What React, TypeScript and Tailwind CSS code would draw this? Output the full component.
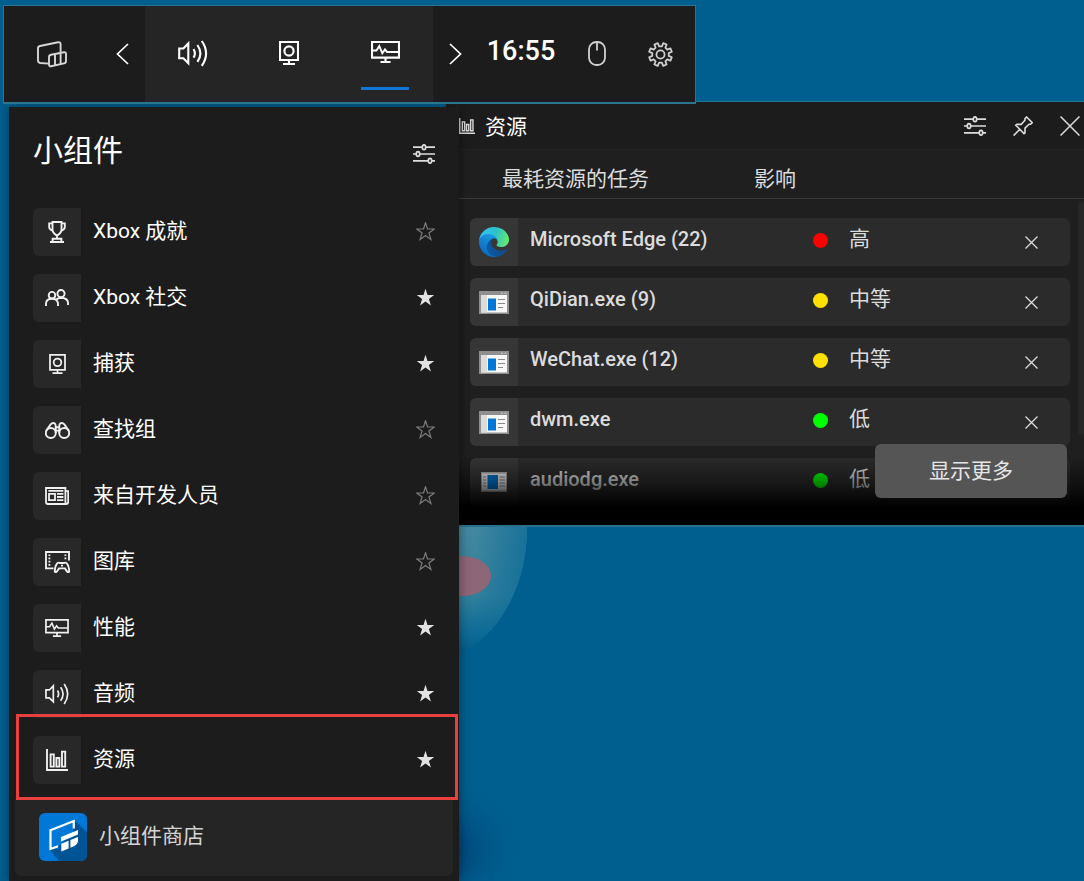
import type { ReactNode } from "react";

type IconProps = { className?: string };

function Line({
  w,
  h,
  className = "",
  stroke = 2.1,
  children,
}: {
  w: number;
  h: number;
  className?: string;
  stroke?: number;
  children: ReactNode;
}) {
  return (
    <svg
      viewBox={`0 0 ${w} ${h}`}
      className={className}
      fill="none"
      stroke="currentColor"
      strokeWidth={stroke}
      aria-hidden="true"
    >
      {children}
    </svg>
  );
}

const WidgetsIcon = ({ className }: IconProps) => (
  <Line w={30} h={27} stroke={1.9} className={className}>
    <path d="M12 22.6 3.2 22Q1 21.6 1 19.6V7.4Q1 5.4 3 5L21 1.2Q23.6 1 23.6 3.2V11" />
    <path d="M12 16.2Q12 14.2 14 13.8L27 11.2Q29 11 29 13V20Q29 22 27 22.4L14 25.2Q12 25.4 12 23.6ZM18 13.2V24.2M23.6 12V23" />
  </Line>
);
const ChevronLeft = ({ className }: IconProps) => (
  <Line w={13} h={22} stroke={1.7} className={className}>
    <path d="M12 1 1.5 11 12 21" />
  </Line>
);
const ChevronRight = ({ className }: IconProps) => (
  <Line w={13} h={22} stroke={1.7} className={className}>
    <path d="M1 1 11.5 11 1 21" />
  </Line>
);
const AudioIcon = ({ className }: IconProps) => (
  <Line w={31} h={27} className={className}>
    <path d="M1.2 8.5H5.4L10.3 3.4V23.2L5.4 18.3H1.2ZM15.5 9.2Q18.3 13.4 15.5 17.6M19.4 5Q25.4 13.4 19.4 21.8M23.8 1Q32.4 13.4 23.8 25.8" />
  </Line>
);
const CaptureIcon = ({ className }: IconProps) => (
  <Line w={20} h={24} className={className}>
    <path d="M1 1H19V19H1ZM10 19V22M4 23H16" />
    <circle cx="10" cy="10" r="4.6" />
  </Line>
);
const PerformanceIcon = ({ className }: IconProps) => (
  <Line w={29} h={22} className={className}>
    <path d="M1 1H28V16.6H1ZM14.5 17V20M9.5 21H19.5" />
    <path d="M1 9.5H5.5L8.3 5 11.3 12.3 14 8.4 16 11H28" strokeWidth="1.9" />
  </Line>
);
const MouseIcon = ({ className }: IconProps) => (
  <Line w={18} h={25} stroke={1.8} className={className}>
    <rect x="1" y="1" width="16" height="23" rx="7.5" />
    <path d="M9 1V9.5" />
  </Line>
);

const TOOTH_ANGLES = [0, 45, 90, 135, 180, 225, 270, 315];
const gearOutline = TOOTH_ANGLES.map((deg) =>
  (
    [
      [8, -13],
      [11.2, -9],
      [11.2, 9],
      [8, 13],
    ] as const
  )
    .map(([r, offset]) => {
      const a = ((deg + 22.5 + offset) * Math.PI) / 180;
      return `${(12 + r * Math.cos(a)).toFixed(2)} ${(12 + r * Math.sin(a)).toFixed(2)}`;
    })
    .join("L"),
).join("L");

const GearIcon = ({ className }: IconProps) => (
  <Line w={24} h={24} stroke={1.7} className={className}>
    <path d={`M${gearOutline}Z`} strokeLinejoin="round" />
    <circle cx="12" cy="12" r="3.9" />
  </Line>
);
const SlidersIcon = ({ className }: IconProps) => (
  <Line w={22} h={20} stroke={1.7} className={className}>
    <path d="M0 3.2H9M13 3.2H22M0 10H3M7 10H22M0 16.8H15M19 16.8H22" />
    <ellipse cx="11" cy="3.2" rx="1.7" ry="2.4" />
    <ellipse cx="5" cy="10" rx="1.7" ry="2.4" />
    <ellipse cx="17" cy="16.8" rx="1.7" ry="2.4" />
  </Line>
);
const PinIcon = ({ className }: IconProps) => (
  <Line w={20} h={20} stroke={1.6} className={className}>
    <path d="M.6 19.6 7.4 12.8M13.6 1 19.2 6.6 17.6 8.2H16L12 12.2V16.8L11 17.6 2.8 9.2 3.8 8.4H8.2L12 4.2V2.6Z" />
  </Line>
);
const CloseIcon = ({ className }: IconProps) => (
  <Line w={20} h={20} stroke={1.5} className={className}>
    <path d="M.5.5 19.5 19.5M19.5.5.5 19.5" />
  </Line>
);
const DismissIcon = ({ className }: IconProps) => (
  <Line w={13} h={13} stroke={1.3} className={className}>
    <path d="M.5.5 12.5 12.5M12.5.5.5 12.5" />
  </Line>
);
const TrophyIcon = ({ className }: IconProps) => (
  <Line w={18} h={22} stroke={1.9} className={className}>
    <path d="M4.5 1H13.5V8.5Q13.5 12 9 14.6 4.5 12 4.5 8.5ZM4.5 2.4H1.2V6Q1.2 8.6 4.8 9.8M13.5 2.4H16.8V6Q16.8 8.6 13.2 9.8M9 14.6V17.6M4.6 21V17.8H13.4V21M2 21H16" />
  </Line>
);
const SocialIcon = ({ className }: IconProps) => (
  <Line w={24} h={18} stroke={1.9} className={className}>
    <circle cx="7" cy="6.2" r="3.3" />
    <circle cx="16" cy="4.6" r="3.6" />
    <path d="M1 17V14.5Q1.2 9.8 7 9.8 12.6 9.8 13 14.5V17M11.2 11Q12.6 8.8 16 8.8 22.6 9.2 23 13.5V16" />
  </Line>
);
const BinocularsIcon = ({ className }: IconProps) => (
  <Line w={25} h={17} stroke={1.9} className={className}>
    <circle cx="5.8" cy="11" r="5" />
    <circle cx="19.2" cy="11" r="5" />
    <path d="M1.4 8.6 5.6 2.4Q7.6 .2 9.8 1.4 10.6 2 10.7 4V11M23.6 8.6 19.4 2.4Q17.4 .2 15.2 1.4 14.4 2 14.3 4V11M10.7 5.2H14.3M10.7 8.6H14.3" />
  </Line>
);
const NewsIcon = ({ className }: IconProps) => (
  <Line w={24} h={18} stroke={1.8} className={className}>
    <path d="M20.4 15V1H1V15Q1 17 3 17H21Q23.2 17 23.2 15V4.2H20.8M20.4 15Q20.4 16.4 21.4 17M4 6.9H10V13.2H4ZM12 6.9H18.4M12 10H18.4M12 13.2H18.4M3.4 3.8H18.4" />
  </Line>
);
const GalleryIcon = ({ className }: IconProps) => (
  <Line w={25} h={22} stroke={1.9} className={className}>
    <path d="M8.5 17.4H1V1H24V9.5" />
    <path d="M4.4 3.4V16M20.4 3.4V9.5" strokeDasharray="1.7 1.5" />
    <path d="M9.8 20.6Q9.8 15 12.4 12.2 13.4 11.2 14.8 12H19.2Q20.6 11.2 21.6 12.2 24.2 15 24.2 20.6 23 22 21.4 19.6L20 17.4H14L12.6 19.6Q11 22 9.8 20.6ZM16 14.6H18" />
  </Line>
);
const ResourcesIcon = ({ className }: IconProps) => (
  <Line w={22} h={22} stroke={1.9} className={className}>
    <path d="M1 0V21H22M4.6 5.4H7.8V17.6H4.6ZM10.4 9H13.4V17.6H10.4ZM16 2.6H19.2V17.6H16Z" />
  </Line>
);

const STAR = "M9.5.8 11.5 7H18.2L12.9 10.9 14.9 17.4 9.5 13.5 4.1 17.4 6.1 10.9.8 7H7.5Z";
const Star = ({ filled }: { filled: boolean }) => (
  <svg viewBox="0 0 19 19" className="size-[19px]" aria-hidden="true">
    {filled ? (
      <path d={STAR} fill="#e2e2e2" />
    ) : (
      <path d={STAR} fill="none" stroke="#7c7c7c" strokeWidth="1.2" />
    )}
  </svg>
);

const EdgeIcon = () => (
  <svg viewBox="0 0 256 256" className="size-[30px]" aria-hidden="true">
    <defs>
      <linearGradient id="edgeDeep" x1="63" y1="177" x2="241" y2="177" gradientUnits="userSpaceOnUse">
        <stop offset="0" stopColor="#0c59a4" />
        <stop offset="1" stopColor="#114a8b" />
      </linearGradient>
      <linearGradient id="edgeBlue" x1="130" y1="70" x2="50" y2="230" gradientUnits="userSpaceOnUse">
        <stop offset="0" stopColor="#1b9de2" />
        <stop offset=".5" stopColor="#1480d0" />
        <stop offset="1" stopColor="#0c6cc0" />
      </linearGradient>
      <linearGradient id="edgeGreen" x1="20" y1="60" x2="245" y2="130" gradientUnits="userSpaceOnUse">
        <stop offset="0" stopColor="#35c1f1" />
        <stop offset=".5" stopColor="#2fc2c6" />
        <stop offset="1" stopColor="#66eb6e" />
      </linearGradient>
    </defs>
    <path
      fill="url(#edgeDeep)"
      d="M235.68 190.46a93.73 93.73 0 0 1-10.54 4.71 101.87 101.87 0 0 1-35.9 6.46c-47.32 0-88.54-32.55-88.54-74.32a31.48 31.48 0 0 1 16.43-27.31c-42.8 1.8-53.8 46.4-53.8 72.53 0 73.88 68.09 81.37 82.76 81.37 7.91 0 19.84-2.3 27-4.56l1.31-.44A128.34 128.34 0 0 0 241 196.34a4 4 0 0 0-5.32-5.88z"
    />
    <path
      fill="url(#edgeBlue)"
      d="M105.73 241.42A79.2 79.2 0 0 1 83 220.08a80.72 80.72 0 0 1 29.49-120c3.12-1.47 8.45-4.13 15.54-4a32.35 32.35 0 0 1 25.69 13 31.88 31.88 0 0 1 6.36 18.66c0-.21 24.46-79.6-80-79.6-43.9 0-80 41.66-80 78.21a130.15 130.15 0 0 0 12.11 56 128 128 0 0 0 156.38 67.11 75.55 75.55 0 0 1-62.78-8z"
    />
    <path
      fill="url(#edgeGreen)"
      d="M152.33 148.86c-.81 1.05-3.3 2.5-3.3 5.66 0 2.61 1.7 5.12 4.72 7.23 14.38 10 41.49 8.68 41.56 8.68a59.56 59.56 0 0 0 30.27-8.35A61.38 61.38 0 0 0 256 109.18c.26-22.41-8-37.31-11.34-43.91C223.46 23.84 177.72 0 128 0A128 128 0 0 0 0 126.2c.48-36.54 36.8-66.05 80-66.05 3.5 0 23.46.34 42 10.07 16.34 8.58 24.9 18.94 30.85 29.21 6.18 10.67 7.28 24.15 7.28 29.52s-2.74 13.33-7.8 19.91z"
    />
  </svg>
);

const AppWindowIcon = () => (
  <svg viewBox="0 0 30 23" className="h-[23px] w-[30px]" aria-hidden="true">
    <path d="M0 0H30V23H0Z" fill="#8f8f8f" />
    <path d="M22 1.5H24V3H22ZM25.5 1.5H27.5V3H25.5Z" fill="#b8b8b8" />
    <path d="M2 4H28V21.5H2Z" fill="#f8f8f8" />
    <path d="M2 4H8V21.5H2Z" fill="#dcdcdc" />
    <path d="M9 7.5H17V19.5H9Z" fill="#0078d7" />
    <path d="M19 8.5H26M19 12.5H26M19 16.5H24" stroke="#8a8a8a" strokeWidth="1.2" />
  </svg>
);

const ServiceIcon = () => (
  <svg viewBox="0 0 26 20" className="h-5 w-[26px]" aria-hidden="true">
    <path d="M0 0H26V20H0Z" fill="#a8a8a8" />
    <path d="M1 1.5H25V18.5H1Z" fill="#f0f0f0" />
    <path d="M6.5 3H17V17H6.5Z" fill="#0078d7" />
    <path
      d="M2 5H5M2 8H5M2 11H5M2 14H5M18.5 5H24M18.5 8H24M18.5 11H24M18.5 14H24"
      stroke="#888"
      strokeWidth="1"
    />
  </svg>
);

const StoreIcon = () => (
  <svg viewBox="0 0 48 48" className="size-12 rounded-md" aria-hidden="true">
    <path d="M0 0H48V48H0Z" fill="#0078d7" />
    <path d="M35 7 48 19V48H20L10 36Z" fill="#005496" />
    <path d="M11 17.5 34 8.5V24L22 36 11 36Z" fill="#0078d7" />
    <path d="M19 34 26 27 39 22V38L22 40Z" fill="#005496" />
    <path d="M19 33.2 11.5 36V17.2L34.8 8V15.5" fill="none" stroke="#fff" strokeWidth="2.2" />
    <path d="M22 24 39 17V21.5L22 28.5ZM22.3 30.8 29.6 27.8V35.5L22.3 38.6ZM31.4 27 39 24V28.5Q38.6 31.4 35.5 33L31.4 34.7Z" fill="#fff" />
  </svg>
);

const Wallpaper = () => (
  <svg className="absolute top-0 left-0 h-[881px] w-[700px]" viewBox="0 0 700 881" aria-hidden="true">
    <defs>
      <linearGradient id="bubble" x1="0" y1="526" x2="0" y2="662" gradientUnits="userSpaceOnUse">
        <stop offset="0" stopColor="#43889e" />
        <stop offset=".5" stopColor="#32809c" />
        <stop offset=".8" stopColor="#0c6a96" />
        <stop offset="1" stopColor="#00547f" />
      </linearGradient>
      <linearGradient id="bubbleSide" x1="475" y1="0" x2="527" y2="0" gradientUnits="userSpaceOnUse">
        <stop offset="0" stopColor="#0a6a98" stopOpacity="0" />
        <stop offset="1" stopColor="#0a6a98" stopOpacity=".75" />
      </linearGradient>
      <radialGradient id="deep" cx="450" cy="850" r="75" gradientUnits="userSpaceOnUse">
        <stop offset="0" stopColor="#003f74" />
        <stop offset="1" stopColor="#005f8f" stopOpacity="0" />
      </radialGradient>
    </defs>
    <ellipse cx="425" cy="528" rx="102" ry="134" fill="url(#bubble)" />
    <ellipse cx="425" cy="528" rx="102" ry="134" fill="url(#bubbleSide)" />
    <ellipse cx="462" cy="576" rx="29" ry="20" fill="#8d6678" />
    <circle cx="450" cy="850" r="75" fill="url(#deep)" />
  </svg>
);

const widgets = [
  { label: "Xbox 成就", icon: <TrophyIcon className="h-[22px] w-[18px]" />, starred: false },
  { label: "Xbox 社交", icon: <SocialIcon className="h-[18px] w-6" />, starred: true },
  { label: "捕获", icon: <CaptureIcon className="h-5 w-[17px]" />, starred: true },
  { label: "查找组", icon: <BinocularsIcon className="h-[17px] w-[25px]" />, starred: false },
  { label: "来自开发人员", icon: <NewsIcon className="h-[18px] w-6" />, starred: false },
  { label: "图库", icon: <GalleryIcon className="h-[22px] w-[25px]" />, starred: false },
  { label: "性能", icon: <PerformanceIcon className="h-[18px] w-6" />, starred: true },
  { label: "音频", icon: <AudioIcon className="h-[22px] w-[25px]" />, starred: true },
  { label: "资源", icon: <ResourcesIcon className="size-[22px]" />, starred: true },
];

const tasks = [
  { name: "Microsoft Edge (22)", level: "高", dot: "bg-[#ff0000]", icon: <EdgeIcon /> },
  { name: "QiDian.exe (9)", level: "中等", dot: "bg-[#ffe100]", icon: <AppWindowIcon /> },
  { name: "WeChat.exe (12)", level: "中等", dot: "bg-[#ffe100]", icon: <AppWindowIcon /> },
  { name: "dwm.exe", level: "低", dot: "bg-[#00ff00]", icon: <AppWindowIcon /> },
  { name: "audiodg.exe", level: "低", dot: "bg-[#00ff00]", icon: <ServiceIcon /> },
];

function GameBar() {
  return (
    <header className="absolute top-[5px] left-[3px] z-20 flex h-[99px] w-[693px] border border-b-2 border-[#2c7590] bg-[#1c1c1c] text-white">
      <button aria-label="小组件菜单" className="flex w-24 items-center justify-center text-[#d6d6d6]">
        <WidgetsIcon className="h-[27px] w-[30px]" />
      </button>
      <button aria-label="上一个" className="flex w-[45px] items-center justify-center">
        <ChevronLeft className="h-[22px] w-[13px]" />
      </button>
      <nav className="flex bg-[#252525]">
        <button aria-label="音频" className="flex w-24 items-center justify-center pb-0.5">
          <AudioIcon className="h-[27px] w-[31px]" />
        </button>
        <button aria-label="捕获" className="flex w-24 items-center justify-center pb-0.5">
          <CaptureIcon className="h-6 w-5" />
        </button>
        <button aria-label="性能" className="flex w-24 flex-col items-center justify-between pt-[35px] pb-3">
          <PerformanceIcon className="h-[22px] w-[29px]" />
          <span className="h-[3px] w-12 bg-[#0f78d4]" />
        </button>
      </nav>
      <button aria-label="下一个" className="flex w-[45px] items-center justify-center">
        <ChevronRight className="h-[22px] w-[13px]" />
      </button>
      <time className="flex w-[86px] items-center justify-center pb-1.5 text-[27px] font-medium">16:55</time>
      <button aria-label="鼠标" className="flex w-[66px] items-center justify-center pb-0.5 text-[#d0d0d0]">
        <MouseIcon className="h-[25px] w-[18px]" />
      </button>
      <button aria-label="设置" className="flex w-[60px] items-center justify-center text-[#d0d0d0]">
        <GearIcon className="size-[25px]" />
      </button>
    </header>
  );
}

function WidgetMenu() {
  return (
    <aside className="absolute top-[107px] bottom-0 left-[9px] z-10 flex w-[450px] flex-col bg-[#1c1c1c] shadow-[0_0_10px_rgba(0,0,0,0.45)]">
      <div className="flex h-[101px] shrink-0 items-start justify-between px-6 pt-[22px]">
        <h1 className="text-[30px] leading-[44px] text-white">小组件</h1>
        <button aria-label="自定义" className="pt-[15px] text-[#dcdcdc]">
          <SlidersIcon className="h-5 w-[22px]" />
        </button>
      </div>
      <ul className="flex shrink-0 flex-col gap-[18px] px-6">
        {widgets.map((w) => (
          <li key={w.label} className="flex h-12 items-center">
            <button className="flex flex-1 items-center gap-3 text-left text-[21px] text-white">
              <span className="flex h-12 w-12 items-center justify-center rounded-l-md bg-[#282828] text-[#f0f0f0]">
                {w.icon}
              </span>
              <span>{w.label}</span>
            </button>
            <button aria-label={`收藏 ${w.label}`} aria-pressed={w.starred} className="pb-0.5">
              <Star filled={w.starred} />
            </button>
          </li>
        ))}
      </ul>
      <button className="mx-1.5 mt-3.5 flex h-[78px] shrink-0 items-center gap-3 rounded-b-md bg-[#252525] pl-6 text-[21px] text-[#d4d4d4]">
        <StoreIcon />
        <span>小组件商店</span>
      </button>
      <div className="pointer-events-none absolute top-[607px] left-[7px] h-[86px] w-[442px] border-3 border-[#e8403c]" />
    </aside>
  );
}

function ResourcesWindow() {
  return (
    <section className="absolute top-[101px] right-0 left-[446px] flex h-[426px] flex-col overflow-hidden border-t border-b-2 border-t-[#1f7397] border-b-[#2a6f8c] bg-[#1f1f1f] pl-[13px]">
      <div className="flex h-12 shrink-0 items-center justify-between border-b border-[#232323] bg-[#1c1c1c] pr-1">
        <h2 className="flex items-center gap-2.5 text-[21px] text-white">
          <ResourcesIcon className="size-4 text-[#dcdcdc]" />
          <span className="pt-1">资源</span>
        </h2>
        <div className="flex items-center gap-[27px] text-[#dcdcdc]">
          <button aria-label="选项">
            <SlidersIcon className="h-5 w-[22px]" />
          </button>
          <button aria-label="固定">
            <PinIcon className="size-5" />
          </button>
          <button aria-label="关闭">
            <CloseIcon className="size-5" />
          </button>
        </div>
      </div>
      <table className="block text-[21px] text-[#dcdcdc]">
        <thead className="block">
          <tr className="grid h-[49px] grid-cols-[252px_1fr] items-center border-b border-[#3a3a3a] pt-3 pl-[43px]">
            <th className="text-left font-normal">最耗资源的任务</th>
            <th className="text-left font-normal">影响</th>
          </tr>
        </thead>
        <tbody className="flex flex-col gap-3 pt-[19px] pr-3.5 pl-[11px]">
          {tasks.map((t) => (
            <tr
              key={t.name}
              className="grid h-12 grid-cols-[343px_1fr_78px] items-center overflow-hidden rounded-md bg-[#2b2b2b]"
            >
              <td className="flex items-center gap-3">
                <span className="flex size-12 items-center justify-center bg-[#363636]">{t.icon}</span>
                <span className="pb-1.5 text-[20px] font-medium">{t.name}</span>
              </td>
              <td className="flex items-center gap-[21px] pb-1">
                <span className={`size-[15px] rounded-full ${t.dot}`} />
                <span>{t.level}</span>
              </td>
              <td className="flex justify-center">
                <button aria-label={`结束 ${t.name}`} className="p-2">
                  <DismissIcon className="size-[13px]" />
                </button>
              </td>
            </tr>
          ))}
        </tbody>
      </table>
      <div className="pointer-events-none absolute inset-x-0 bottom-0 h-[70px] bg-linear-to-b from-transparent via-black/45 via-40% to-black to-75%" />
      <div className="absolute top-[100px] right-0 bottom-[90px] w-1.5 rounded-full bg-[#272727]" />
      <button className="absolute right-[17px] bottom-[27px] h-[54px] w-48 rounded-md bg-[#555555] pt-0.5 text-[21px] text-[#e6e6e6]">
        显示更多
      </button>
    </section>
  );
}

export default function App() {
  return (
    <main className="relative min-h-screen overflow-hidden bg-[#005f8f] font-[Roboto,'Noto_Sans_CJK_SC',sans-serif]">
      <Wallpaper />
      <GameBar />
      <ResourcesWindow />
      <WidgetMenu />
    </main>
  );
}
